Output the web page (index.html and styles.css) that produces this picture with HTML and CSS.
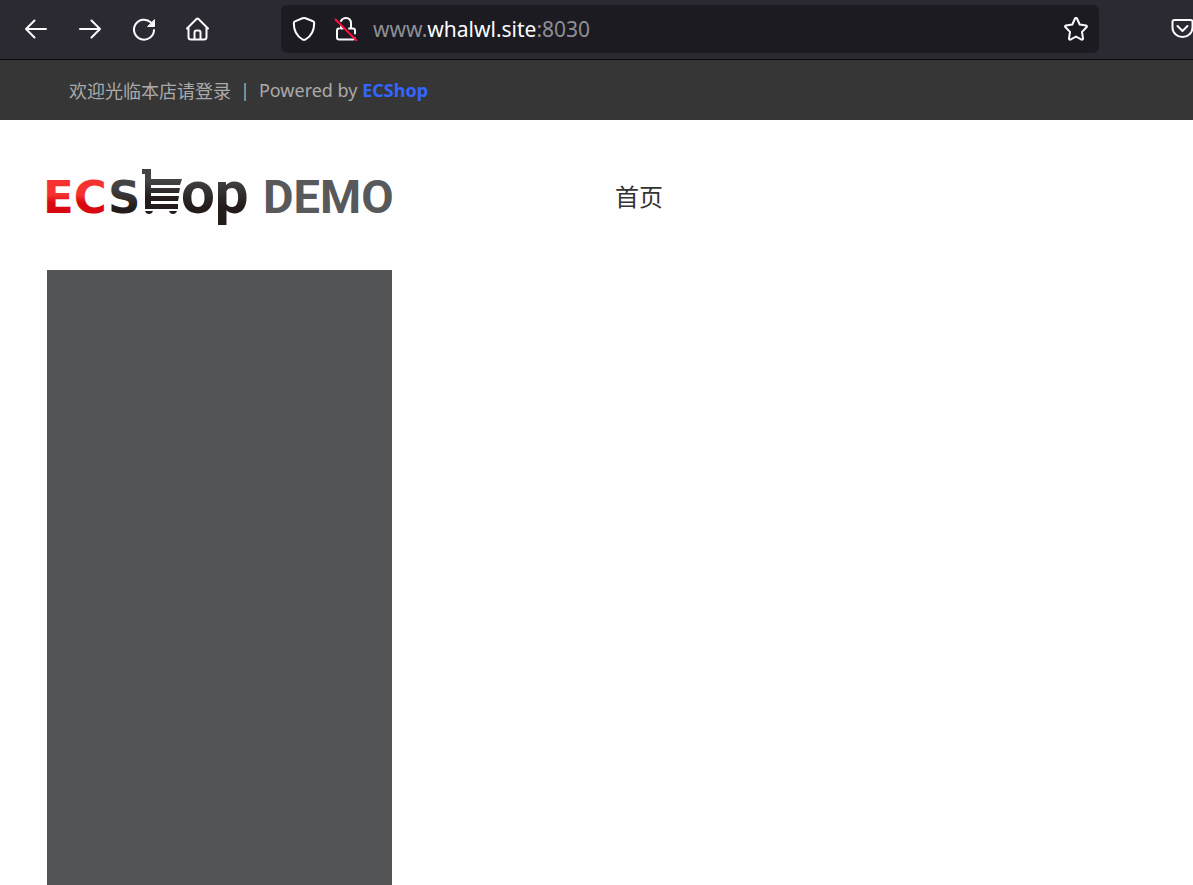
FILE: index.html
```html
<!DOCTYPE html>
<html lang="zh-CN">

<head>
    <meta charset="UTF-8">
    <meta name="viewport" content="width=device-width, initial-scale=1.0">
    <title>ECShop DEMO</title>
    <link rel="stylesheet" href="styles.css">
</head>

<body>
    <div class="toolbar">
        <div class="buttons">
            <button class="icon-btn" aria-label="Back">
                <svg viewBox="0 0 24 24"><path d="M22 12H2M10.500 3.500L2 12l8.500 8.500" /></svg>
            </button>
            <button class="icon-btn" aria-label="Forward">
                <svg viewBox="0 0 24 24"><path d="M2 12h20M13.500 3.500L22 12l-8.500 8.500" /></svg>
            </button>
            <button class="icon-btn" aria-label="Reload">
                <svg viewBox="0 0 24 24">
                    <path d="M22 13a10 10 0 1 1-3-7.500" />
                    <path class="solid" d="M22.500 3v6.500H16z" />
                </svg>
            </button>
            <button class="icon-btn" aria-label="Home">
                <svg viewBox="0 0 24 24">
                    <path d="M1 11.500L10.500 2q1-1 2 0l9.500 9.500M2.500 10v10q0 2.500 2.500 2.500h13q2.500 0 2.500-2.500V10M8.500 22v-6.500q0-2 2-2h2q2 0 2 2V22" />
                </svg>
            </button>
        </div>
        <div class="urlbar">
            <button class="icon-btn" aria-label="Tracking protection">
                <svg viewBox="0 0 24 24">
                    <path d="M12 1q.7 0 1.500.3l7.500 3q1.200.5 1.200 1.700 0 11.500-8.700 16.500-1.500.7-3 0Q1.800 17.500 1.800 6q0-1.200 1.200-1.700l7.500-3Q11.300 1 12 1z" />
                </svg>
            </button>
            <button class="icon-btn" aria-label="Connection not secure">
                <svg viewBox="0 0 24 24">
                    <path d="M7 4q1.500-3 5-3 5 0 5 5.500v5M5 11.500q-2 0-2 2v7q0 2 2 2h14q1.500 0 1.500-1.500M15 11.500h4q2 0 2 2v3M7 9.500v2h2" />
                    <path class="slash" d="M1.500 2.500l21 21" />
                </svg>
            </button>
            <div class="url" role="textbox" aria-label="Address" contenteditable="true" spellcheck="false">www.<span class="domain">whalwl.site</span>:8030</div>
            <button class="icon-btn" aria-label="Bookmark">
                <svg viewBox="0 0 24 24">
                    <path d="M11 1.500q1-1.500 2 0l2.700 6 6.300.9q1.500.5.5 1.900l-4.500 4.600 1 6.600q0 1.500-1.500 1.100L12 19.500l-5.500 3.100q-1.500.4-1.500-1.100l1-6.600-4.500-4.600q-1-1.400.5-1.900l6.300-.9z" />
                </svg>
            </button>
        </div>
        <button class="icon-btn pocket" aria-label="Save to Pocket">
            <svg viewBox="0 0 24 24">
                <path d="M4.500 3h16q2 0 2 2v5.500a10 9.500 0 0 1-20 0V5q0-2 2-2zM7.500 9l5 5 5-5" />
            </svg>
        </button>
    </div>

    <div class="topbar">
        <span>欢迎光临本店请登录</span>
        <span>|</span>
        <span>Powered by <a href="#">ECShop</a></span>
    </div>

    <header class="header">
        <a class="logo" href="#" aria-label="ECShop DEMO">
            <svg viewBox="0 0 345 60">
                <defs>
                    <linearGradient id="red" x1="0" y1="0" x2="0" y2="1">
                        <stop offset="0.45" stop-color="#f5322f" />
                        <stop offset="0.6" stop-color="#d80710" />
                    </linearGradient>
                    <linearGradient id="dark" x1="0" y1="0" x2="0" y2="1">
                        <stop offset="0.3" stop-color="#444" />
                        <stop offset="0.7" stop-color="#231c1a" />
                    </linearGradient>
                </defs>
                <text class="word red" x="-4" y="48">EC</text>
                <text class="word dark" x="61" y="48">S</text>
                <!-- shopping cart -->
                <path fill="url(#dark)" d="M95 4h9v10h31l-2 6h-29v3h29l-1 5h-28v3h28l-1 5h-27v3h27v5H98V9h-3z" />
                <path fill="#231c1a" d="M98 46h8q-1 3-4 3t-4-3zM122 46h8q-1 3-4 3t-4-3z" />
                <text class="small dark" x="134" y="48">op</text>
                <text class="demo" x="216" y="48">DEMO</text>
            </svg>
        </a>
        <nav class="nav">
            <a href="#">首页</a>
        </nav>
    </header>

    <main class="main">
        <aside class="sidebar"></aside>
    </main>
</body>

</html>
```

FILE: styles.css
```css
body {
    margin: 0;
    min-height: 100vh;
    display: flex;
    flex-direction: column;
    background: #fefefe;
    font-family: "Noto Sans", "Noto Sans CJK SC", sans-serif;
    overflow-x: hidden;
}

a {
    color: inherit;
    text-decoration: none;
}

.toolbar {
    display: flex;
    align-items: center;
    height: 58px;
    padding: 0 0 1px 24px;
    background: #2b2a33;
    border-bottom: 1px solid #0c0c0d;
}

.buttons {
    display: flex;
    gap: 30px;
    margin-right: 71px;
}

.icon-btn {
    flex: none;
    width: 24px;
    height: 24px;
    padding: 0;
    border: 0;
    background: none;
}

.icon-btn svg {
    display: block;
    fill: none;
    stroke: #fbfbfe;
    stroke-width: 2;
    stroke-linecap: round;
    stroke-linejoin: round;
}

.icon-btn .solid {
    fill: #fbfbfe;
    stroke-width: 1;
}

.icon-btn .slash {
    stroke: #ff0f3f;
}

.urlbar {
    flex: 1;
    display: flex;
    align-items: center;
    gap: 18px;
    height: 48px;
    padding: 0 11px;
    border-radius: 6px;
    background: #1c1b22;
}

.url {
    flex: 1;
    margin-left: -3px;
    font-size: 21px;
    line-height: 30px;
    color: #8f8f95;
    outline: 0;
}

.domain {
    color: #fbfbfe;
}

.pocket {
    margin-left: 71px;
    margin-right: -1px;
}

.topbar {
    display: flex;
    align-items: center;
    gap: 9px;
    height: 60px;
    padding: 0 69px;
    background: #363636;
    color: #aaa;
    font-size: 18px;
}

.topbar a {
    color: #36f;
    font-weight: bold;
}

.header {
    display: flex;
    align-items: center;
    height: 150px;
    padding: 0 47px;
}

.logo {
    width: 345px;
}

.logo svg {
    display: block;
    overflow: visible;
}

.word {
    font: bold 45px "DejaVu Sans", sans-serif;
}

.small {
    font: bold 60px Roboto, sans-serif;
}

.red {
    fill: url(#red);
}

.dark {
    fill: url(#dark);
}

.demo {
    font: bold 47px Roboto, sans-serif;
    fill: #58595b;
}

.nav {
    margin-left: 223px;
    font-size: 24px;
    color: #333;
}

.main {
    flex: 1;
    display: flex;
    padding: 0 47px;
}

.sidebar {
    width: 345px;
    background: #535456;
}
```
